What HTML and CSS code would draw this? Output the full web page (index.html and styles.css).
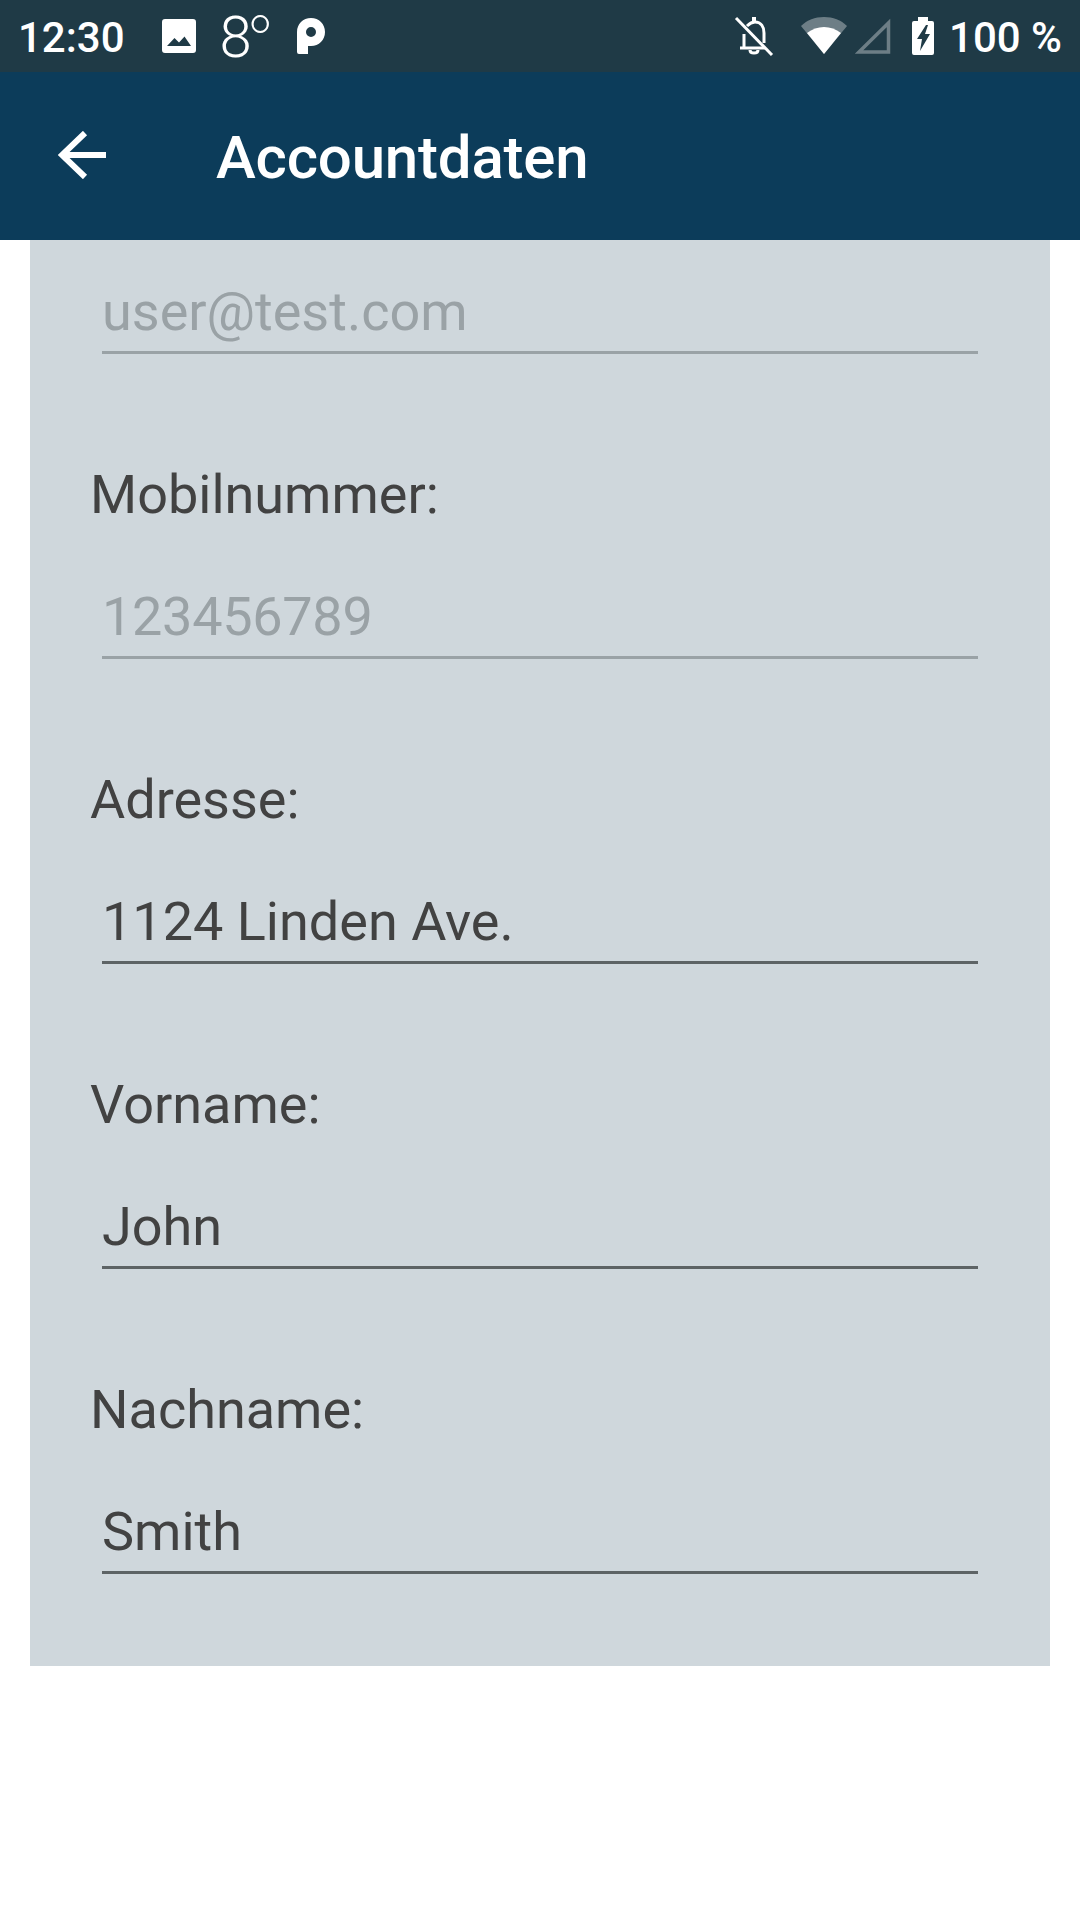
FILE: index.html
```html
<!DOCTYPE html>
<html lang="de">
<head>
<meta charset="utf-8">
<title>Accountdaten</title>
<link rel="stylesheet" href="styles.css">
</head>
<body>
<div class="status">
  <div class="status-left">
    <span class="time">12:30</span>
    <svg class="ic-image" viewBox="0 0 34 34"><path fill="#fff" fill-rule="evenodd" d="M3 0h28a3 3 0 0 1 3 3v28a3 3 0 0 1-3 3H3a3 3 0 0 1-3-3V3a3 3 0 0 1 3-3zM5 27h24l-6.500-9.500-5.500 6-4.500-4.500z"/></svg>
    <span class="temp">8<span class="deg">°</span></span>
    <svg class="ic-p" viewBox="0 0 28 36"><path fill="#fff" fill-rule="evenodd" d="M0 14C0 6 6 0 14 0s14 6 14 14-6 14-14 14h-3v8H2a2 2 0 0 1-2-2zM14 9a5 5 0 1 0 0 10 5 5 0 0 0 0-10z"/></svg>
  </div>
  <div class="status-right">
    <svg class="ic-bell" viewBox="0 0 40 40"><g fill="none" stroke="#fff" stroke-width="3"><path d="M6 32h25M10 32V18M13 10c3-3 5-4 8-4 6 0 9 5 9 11v10"/><path d="M16 34c0 4 8 4 8 0"/><path d="M2 2l36 37"/></g><path fill="#fff" d="M18 1h4v5h-4z"/></svg>
    <svg class="ic-wifi" viewBox="0 0 46 38"><path fill="#fff" fill-opacity=".35" d="M0 9C6 3 14 0 23 0s17 3 23 9L23 37z"/><path fill="#fff" d="M6 16c5-4 11-6 17-6s12 2 17 6L23 37z"/></svg>
    <svg class="ic-signal" viewBox="0 0 36 36"><path fill="none" stroke="#fff" stroke-opacity=".35" stroke-width="3.500" d="M33.500 5v29H4z"/></svg>
    <svg class="ic-batt" viewBox="0 0 22 38"><path fill="#fff" fill-rule="evenodd" d="M6 0h10v4h4a2 2 0 0 1 2 2v30a2 2 0 0 1-2 2H2a2 2 0 0 1-2-2V6a2 2 0 0 1 2-2h4zM14 8L5 22h5L8 34l10-17h-5l3-9z"/></svg>
    <span class="pct">100 %</span>
  </div>
</div>
<header class="appbar">
  <svg class="ic-back" viewBox="0 0 48 48"><path fill="none" stroke="#fff" stroke-width="6" d="M48 24H5M27 2L4 24l23 22"/></svg>
  <h1 class="title">Accountdaten</h1>
</header>
<main class="card">
  <div class="input muted">user@test.com</div>
  <div class="label">Mobilnummer:</div>
  <div class="input muted num">123456789</div>
  <div class="label">Adresse:</div>
  <div class="input">1124 Linden Ave.</div>
  <div class="label">Vorname:</div>
  <div class="input">John</div>
  <div class="label">Nachname:</div>
  <div class="input">Smith</div>
</main>
</body>
</html>
```
FILE: styles.css
```css
* { box-sizing: border-box; }
html, body { margin: 0; padding: 0; }
body { width: 1080px; height: 1920px; background: #fff; font-family: Roboto, sans-serif; overflow: hidden; }
.status { height: 72px; background: #1f3a46; color: #fff; display: flex; justify-content: space-between; align-items: center; padding: 0 18px 0 18px; }
.status-left, .status-right { display: flex; align-items: center; }
.time, .pct { font-size: 42px; font-weight: 500; line-height: 72px; padding-top: 4px; }
.temp { font-size: 58px; font-weight: 300; line-height: 72px; margin-left: 24px; padding-top: 1px; letter-spacing: -6px; }
.deg { font-size: 76px; line-height: 0; font-weight: 100; vertical-align: -13px; letter-spacing: 0; }
.ic-image { width: 34px; height: 34px; margin-left: 37px; }
.ic-p { width: 28px; height: 36px; margin-left: 22px; }
.ic-bell { width: 40px; height: 40px; }
.ic-wifi { width: 46px; height: 38px; margin-left: 27px; }
.ic-signal { width: 36px; height: 36px; margin-left: 8px; }
.ic-batt { width: 22px; height: 38px; margin-left: 21px; }
.pct { margin-left: 15px; }
.appbar { height: 168px; background: #0c3c5a; display: flex; align-items: center; padding-left: 58px; }
.ic-back { width: 48px; height: 48px; margin-top: -2px; }
.title { margin: 2px 0 0 110px; font-size: 60px; font-weight: 500; color: #fff; letter-spacing: -.2px; }
.card { margin: 0 30px; height: 1426px; background: #cfd7dc; padding-top: 33px; display: flex; flex-direction: column; }
.label { margin: 110px 0 53px 60px; height: 61px; line-height: 61px; font-size: 54px; color: #424242; }
.input { flex: none; margin: 0 72px; height: 81px; line-height: 78px; font-size: 54px; color: #424242; border-bottom: 3px solid #5d6365; }
.input.muted { color: #9aa2a6; border-bottom-color: #9aa2a6; }
.input.num { letter-spacing: -.3px; }
```
